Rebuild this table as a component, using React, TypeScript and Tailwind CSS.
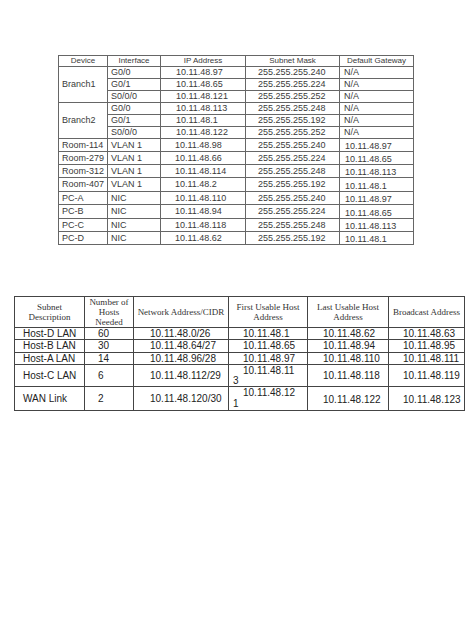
import React from "react";

const topGroups = [
  {
    device: "Branch1",
    rows: [
      ["G0/0", "10.11.48.97", "255.255.255.240", "N/A"],
      ["G0/1", "10.11.48.65", "255.255.255.224", "N/A"],
      ["S0/0/0", "10.11.48.121", "255.255.255.252", "N/A"],
    ],
  },
  {
    device: "Branch2",
    rows: [
      ["G0/0", "10.11.48.113", "255.255.255.248", "N/A"],
      ["G0/1", "10.11.48.1", "255.255.255.192", "N/A"],
      ["S0/0/0", "10.11.48.122", "255.255.255.252", "N/A"],
    ],
  },
];

const topSingles = [
  ["Room-114", "VLAN 1", "10.11.48.98", "255.255.255.240", "10.11.48.97"],
  ["Room-279", "VLAN 1", "10.11.48.66", "255.255.255.224", "10.11.48.65"],
  ["Room-312", "VLAN 1", "10.11.48.114", "255.255.255.248", "10.11.48.113"],
  ["Room-407", "VLAN 1", "10.11.48.2", "255.255.255.192", "10.11.48.1"],
  ["PC-A", "NIC", "10.11.48.110", "255.255.255.240", "10.11.48.97"],
  ["PC-B", "NIC", "10.11.48.94", "255.255.255.224", "10.11.48.65"],
  ["PC-C", "NIC", "10.11.48.118", "255.255.255.248", "10.11.48.113"],
  ["PC-D", "NIC", "10.11.48.62", "255.255.255.192", "10.11.48.1"],
];

const tc = "border-r border-b border-[#666] flex items-center whitespace-nowrap overflow-hidden";

function TopTable() {
  return (
    <div className="ml-[58px] mt-[55px] w-fit grid grid-cols-[49px_53px_85px_94px_74px] grid-rows-[11px_12px_12px_12px_12px_12px_12px_13px_13px_13px_14px_13px_14px_13px_13px] border-l border-t border-[#666] text-[#3a3a3a] font-['Liberation_Sans',Arial,sans-serif] text-[9px] leading-none">
      {["Device", "Interface", "IP Address", "Subnet Mask", "Default Gateway"].map((h) => (
        <div key={h} className={`${tc} justify-center text-[8px]`}>
          {h}
        </div>
      ))}
      {topGroups.map((g) => (
        <React.Fragment key={g.device}>
          <div className={`${tc} row-span-3 pl-[3px]`}>{g.device}</div>
          {g.rows.map((r, i) => (
            <React.Fragment key={i}>
              <div className={`${tc} pl-[3px]`}>{r[0]}</div>
              <div className={`${tc} pl-[15px]`}>{r[1]}</div>
              <div className={`${tc} pl-[12px]`}>{r[2]}</div>
              <div className={`${tc} pl-[4px]`}>{r[3]}</div>
            </React.Fragment>
          ))}
        </React.Fragment>
      ))}
      {topSingles.map((r) => (
        <React.Fragment key={r[0]}>
          <div className={`${tc} pl-[3px]`}>{r[0]}</div>
          <div className={`${tc} pl-[3px]`}>{r[1]}</div>
          <div className={`${tc} pl-[14px]`}>{r[2]}</div>
          <div className={`${tc} pl-[12px]`}>{r[3]}</div>
          <div className={`${tc} pl-[5px] pt-[3px]`}>{r[4]}</div>
        </React.Fragment>
      ))}
    </div>
  );
}

const bottomRows = [
  ["Host-D LAN", "60", "10.11.48.0/26", "10.11.48.1", "10.11.48.62", "10.11.48.63"],
  ["Host-B LAN", "30", "10.11.48.64/27", "10.11.48.65", "10.11.48.94", "10.11.48.95"],
  ["Host-A LAN", "14", "10.11.48.96/28", "10.11.48.97", "10.11.48.110", "10.11.48.111"],
];

const bc = "border-r border-b border-[#444] flex items-center whitespace-nowrap overflow-hidden";

function BottomTable() {
  const headers = [
    ["Subnet", "Description"],
    ["Number of", "Hosts", "Needed"],
    ["Network Address/CIDR"],
    ["First Usable Host", "Address"],
    ["Last Usable Host", "Address"],
    ["Broadcast Address"],
  ];
  return (
    <div className="ml-[14px] mt-[51px] w-fit grid grid-cols-[70px_49px_95px_79px_81px_76px] grid-rows-[31px_12px_13px_12px_22px_24px] border-l border-t border-[#444] text-[#222] font-['Liberation_Sans',Arial,sans-serif] text-[10px] leading-none">
      {headers.map((h, i) => (
        <div
          key={i}
          className={`${bc} flex-col justify-center text-center font-['Liberation_Serif','Times_New_Roman',serif] text-[9px] leading-[10px] text-[#333]`}
        >
          {h.map((l) => (
            <span key={l}>{l}</span>
          ))}
        </div>
      ))}
      {bottomRows.map((r) => (
        <React.Fragment key={r[0]}>
          <div className={`${bc} pl-[8px]`}>{r[0]}</div>
          <div className={`${bc} pl-[13px]`}>{r[1]}</div>
          <div className={`${bc} pl-[16px]`}>{r[2]}</div>
          <div className={`${bc} pl-[14px]`}>{r[3]}</div>
          <div className={`${bc} pl-[15px]`}>{r[4]}</div>
          <div className={`${bc} pl-[14px]`}>{r[5]}</div>
        </React.Fragment>
      ))}
      {/* Host-C LAN */}
      <div className={`${bc} pl-[8px]`}>Host-C LAN</div>
      <div className={`${bc} pl-[13px]`}>6</div>
      <div className={`${bc} pl-[16px]`}>10.11.48.112/29</div>
      <div className="border-r border-b border-[#444] flex flex-col justify-between whitespace-nowrap overflow-hidden pt-[1px] pb-[1px]">
        <span className="pl-[14px]">10.11.48.11</span>
        <span className="pl-[4px]">3</span>
      </div>
      <div className={`${bc} pl-[15px]`}>10.11.48.118</div>
      <div className={`${bc} pl-[14px]`}>10.11.48.119</div>
      {/* WAN Link */}
      <div className={`${bc} pl-[8px]`}>WAN Link</div>
      <div className={`${bc} pl-[13px]`}>2</div>
      <div className={`${bc} pl-[16px]`}>10.11.48.120/30</div>
      <div className="border-r border-b border-[#444] flex flex-col justify-between whitespace-nowrap overflow-hidden pt-[1px] pb-[1px]">
        <span className="pl-[14px]">10.11.48.12</span>
        <span className="pl-[4px]">1</span>
      </div>
      <div className={`${bc} pl-[15px] pt-[2px]`}>10.11.48.122</div>
      <div className={`${bc} pl-[14px] pt-[2px]`}>10.11.48.123</div>
    </div>
  );
}

export default function App() {
  return (
    <div className="w-[474px] h-[632px] bg-white overflow-hidden flex flex-col">
      <TopTable />
      <BottomTable />
    </div>
  );
}
